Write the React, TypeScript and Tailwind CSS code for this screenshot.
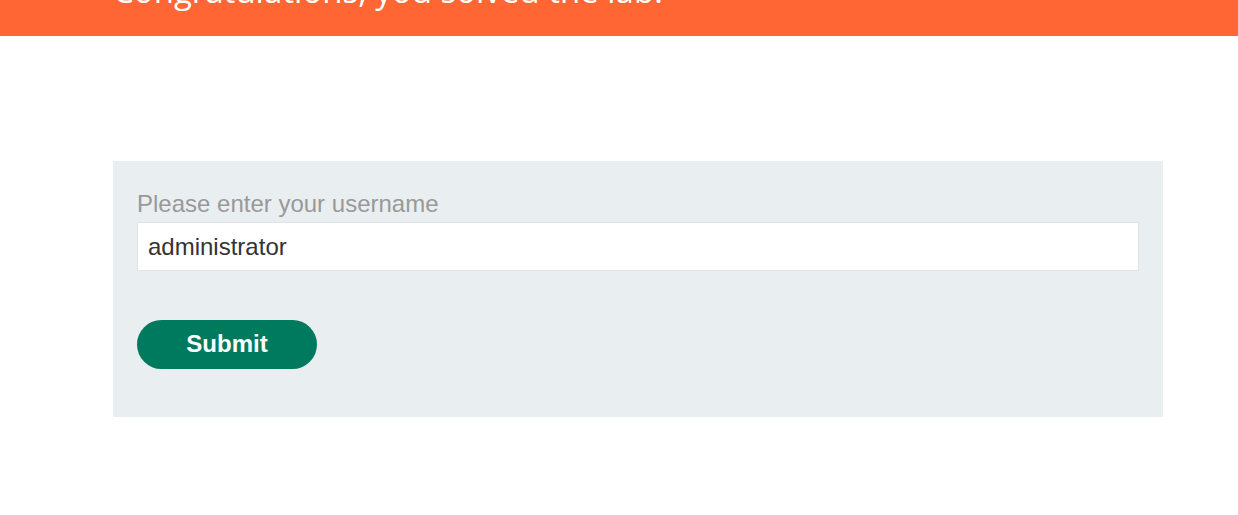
export default function App() {
  return (
    <div className="w-[1238px] h-[515px] bg-white overflow-hidden" style={{ fontFamily: '"Liberation Sans", Arial, sans-serif' }}>
      <div className="h-[36px] bg-[#ff6633] overflow-hidden pl-[113px]">
        <div className="mt-[-26px] text-[33px] leading-[33px] text-white whitespace-nowrap" style={{ fontFamily: '"Open Sans", sans-serif' }}>
          Congratulations, you solved the lab!
        </div>
      </div>
      <div className="mt-[125px] ml-[113px] w-[1050px] h-[256px] bg-[#e9eef1] px-[24px] pt-[29px] flex flex-col">
        <label className="text-[24px] leading-[28px] text-[#999999]">Please enter your username</label>
        <input
          readOnly
          value="administrator"
          className="mt-[4px] h-[49px] w-full bg-white border border-[#e0e4e6] px-[10px] text-[24px] text-[#333333] outline-none"
        />
        <button className="mt-[49px] w-[180px] h-[49px] rounded-full bg-[#007a5f] text-white text-[24px] font-bold pb-[2px]">
          Submit
        </button>
      </div>
    </div>
  );
}
